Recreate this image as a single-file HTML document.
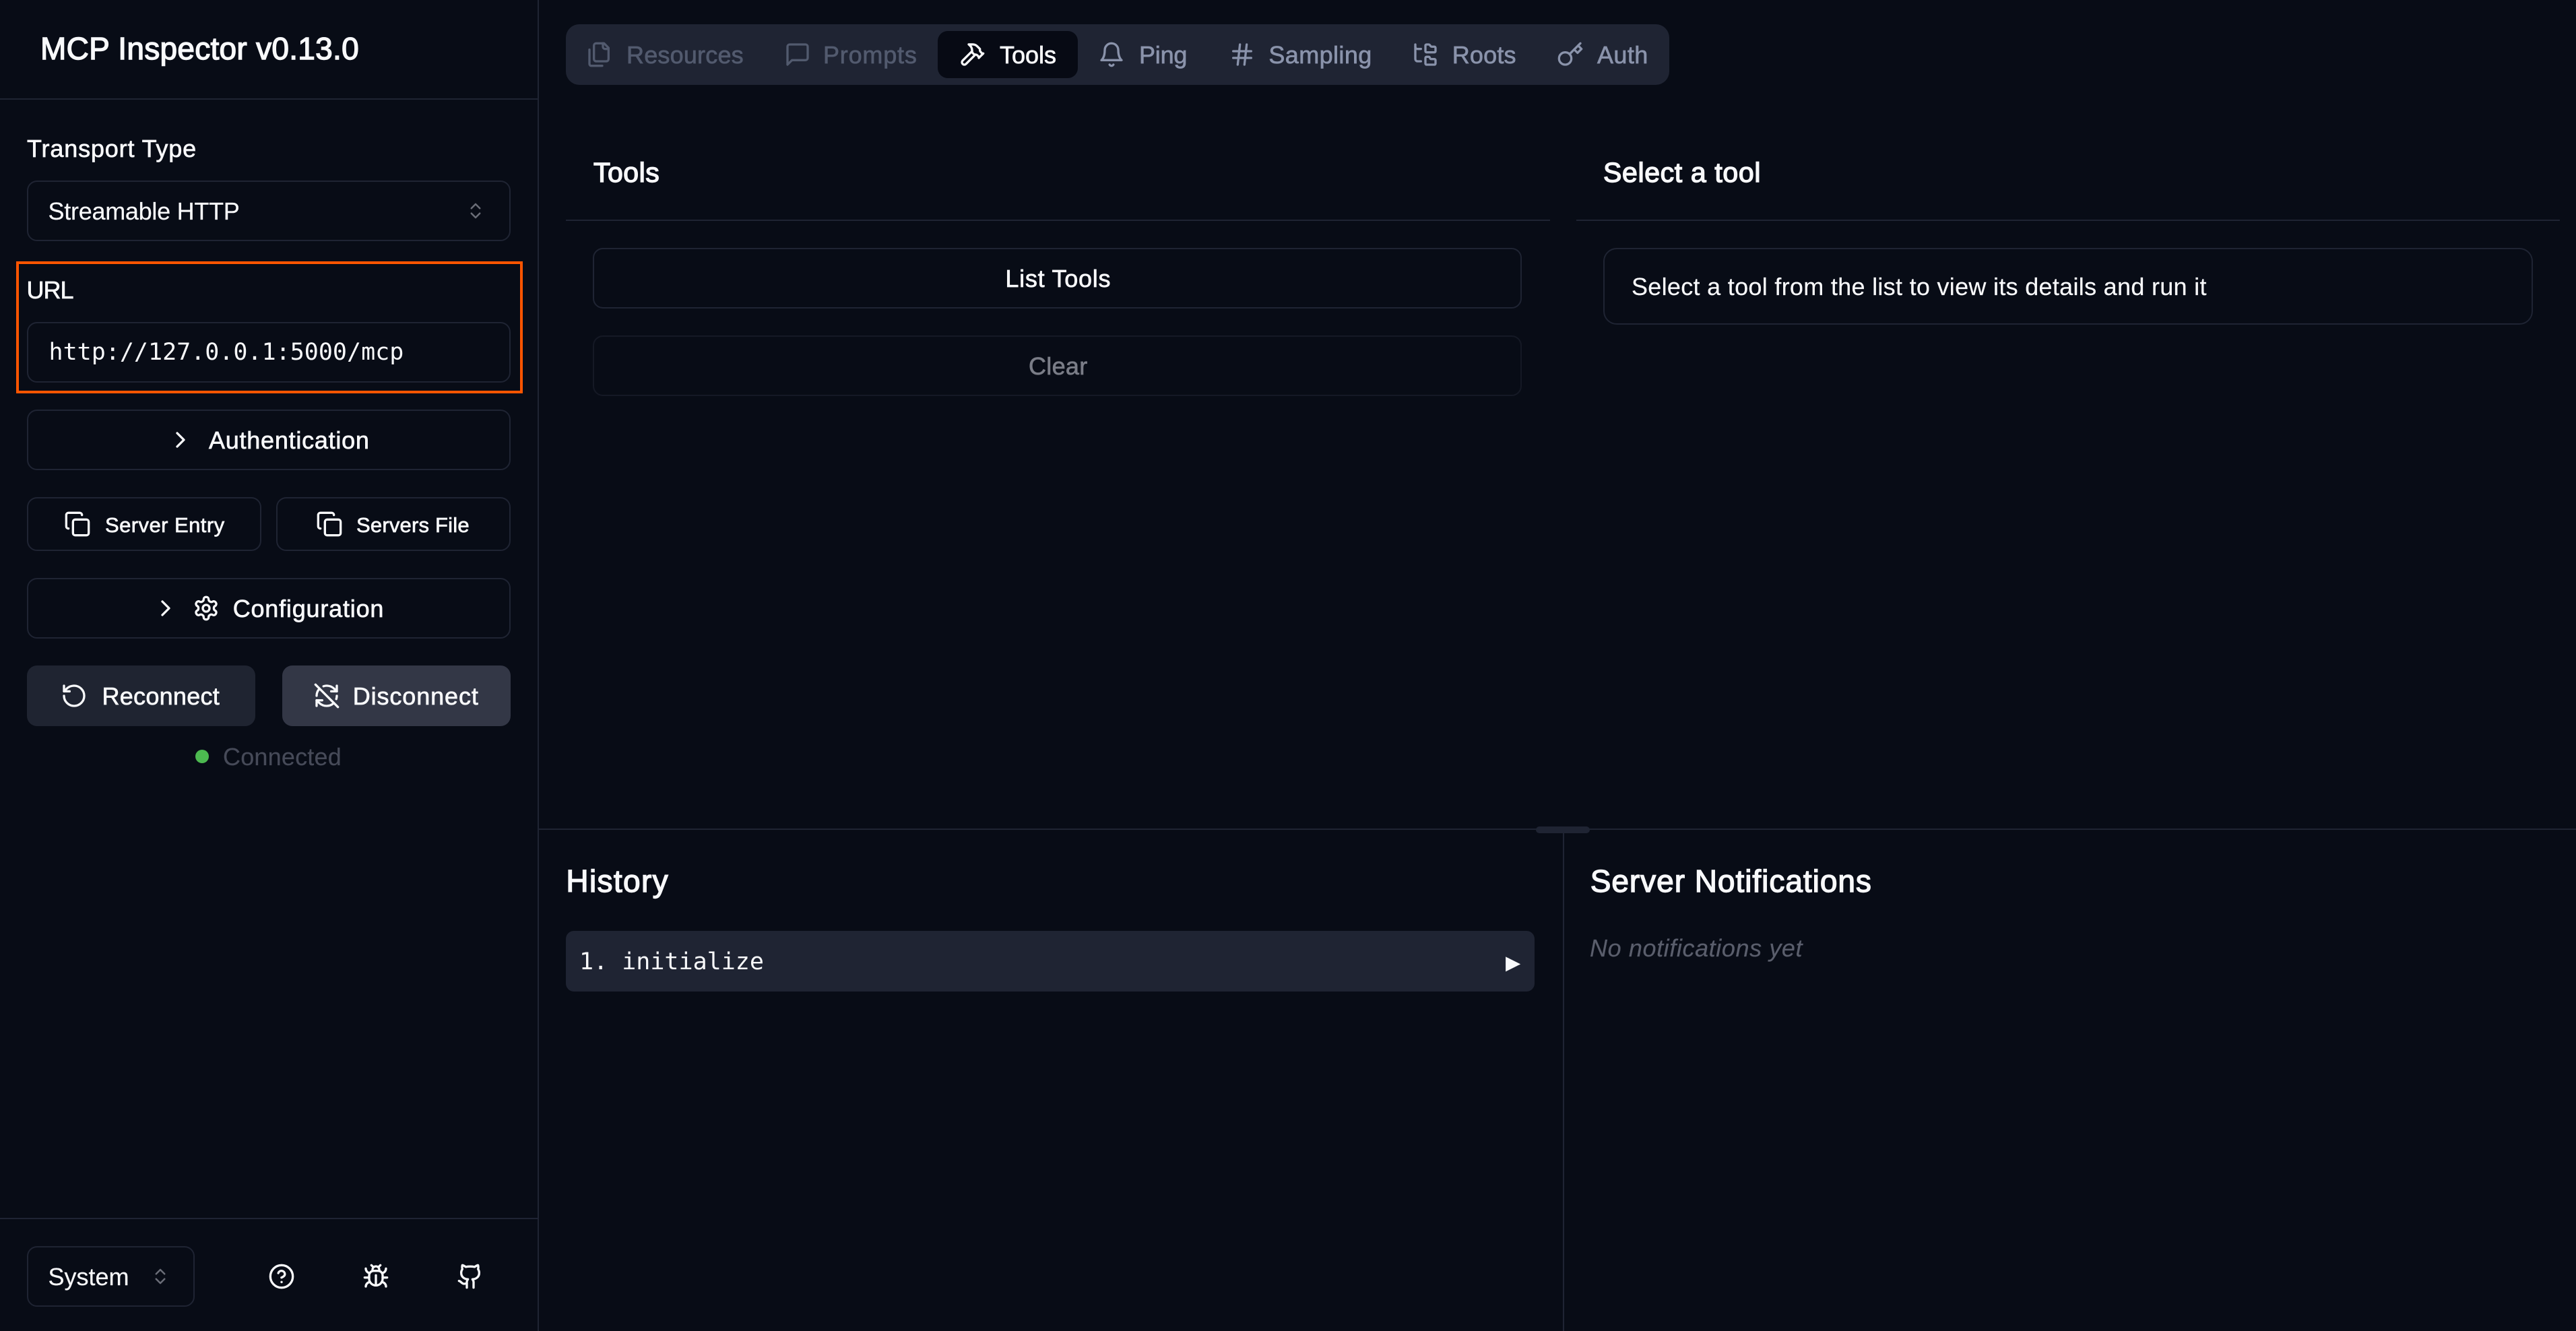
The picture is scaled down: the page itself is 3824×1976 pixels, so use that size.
<!DOCTYPE html>
<html lang="en">
<head>
<meta charset="utf-8">
<title>MCP Inspector</title>
<style>
html,body{margin:0;padding:0;width:3824px;height:1976px;overflow:hidden;background:#080c16}
*{box-sizing:border-box}
#app{position:relative;width:3824px;height:1976px;background:#080c16;color:#f8f9fb;font-family:"Liberation Sans",sans-serif;overflow:hidden}
.b{position:absolute;border:2px solid #1f2433;border-radius:15px}
.f{position:absolute;background:#1f2433}
.t{position:absolute;white-space:nowrap;line-height:1;font-size:36px;margin:0;font-weight:400;-webkit-text-stroke:.2px currentColor}
.m{-webkit-text-stroke:.7px currentColor}
.s{-webkit-text-stroke:1.4px currentColor}
.h41{font-size:41px}
.h46{font-size:46px}
.x31{font-size:31px}
.mono{font-family:"DejaVu Sans Mono","Liberation Mono",monospace;font-size:35px;-webkit-text-stroke:0}
.i{position:absolute;width:40px;height:40px;fill:none;stroke:currentColor;stroke-width:2;stroke-linecap:round;stroke-linejoin:round}
.c30{width:30px;height:30px;color:#6a6d77}
.dim{color:#525a6e}
.mut{color:#8a93ab}
</style>
</head>
<body>
<div id="app">

<!-- Sidebar -->
<div class="f" style="left:798px;top:0;width:2px;height:1976px"></div>
<h1 class="t h46 s" style="left:60px;top:49.2px;letter-spacing:.28px">MCP Inspector v0.13.0</h1>
<div class="f" style="left:0;top:146px;width:798px;height:2px"></div>

<label class="t m" style="left:40px;top:203.4px;letter-spacing:.85px">Transport Type</label>
<div class="b" style="left:40px;top:268px;width:718px;height:90px"></div>
<span class="t" style="left:71.5px;top:296.4px;letter-spacing:-.27px">Streamable HTTP</span>
<svg class="i c30" viewBox="0 0 24 24" style="left:690.5px;top:298px"><path d="m7 15 5 5 5-5"/><path d="m7 9 5-5 5 5"/></svg>

<div style="position:absolute;left:24px;top:388px;width:752px;height:196px;border:4px solid #ff5500"></div>
<label class="t m" style="left:39.5px;top:413.4px;letter-spacing:-1px">URL</label>
<div class="b" style="left:40px;top:478px;width:718px;height:90px"></div>
<span class="t mono" style="left:72.5px;top:506.4px">http://127.0.0.1:5000/mcp</span>

<div class="b" style="left:40px;top:608px;width:718px;height:90px"></div>
<svg class="i" viewBox="0 0 24 24" style="left:248px;top:633px"><path d="m9 18 6-6-6-6"/></svg>
<span class="t m" style="left:310px;top:636.4px;letter-spacing:.75px">Authentication</span>

<div class="b" style="left:40px;top:738px;width:348px;height:80px"></div>
<svg class="i" viewBox="0 0 24 24" style="left:95px;top:758px"><rect x="8" y="8" width="14" height="14" rx="2" ry="2"/><path d="M4 16c-1.1 0-2-.9-2-2V4c0-1.1.9-2 2-2h10c1.1 0 2 .9 2 2"/></svg>
<span class="t x31 m" style="left:156px;top:764.4px;letter-spacing:.44px">Server Entry</span>

<div class="b" style="left:410px;top:738px;width:348px;height:80px"></div>
<svg class="i" viewBox="0 0 24 24" style="left:469px;top:758px"><rect x="8" y="8" width="14" height="14" rx="2" ry="2"/><path d="M4 16c-1.1 0-2-.9-2-2V4c0-1.1.9-2 2-2h10c1.1 0 2 .9 2 2"/></svg>
<span class="t x31 m" style="left:529px;top:764.4px;letter-spacing:.2px">Servers File</span>

<div class="b" style="left:40px;top:858px;width:718px;height:90px"></div>
<svg class="i" viewBox="0 0 24 24" style="left:226px;top:883px"><path d="m9 18 6-6-6-6"/></svg>
<svg class="i" viewBox="0 0 24 24" style="left:286px;top:883px"><path d="M12.22 2h-.44a2 2 0 0 0-2 2v.18a2 2 0 0 1-1 1.73l-.43.25a2 2 0 0 1-2 0l-.15-.08a2 2 0 0 0-2.73.73l-.22.38a2 2 0 0 0 .73 2.73l.15.1a2 2 0 0 1 1 1.72v.51a2 2 0 0 1-1 1.74l-.15.09a2 2 0 0 0-.73 2.73l.22.38a2 2 0 0 0 2.73.73l.15-.08a2 2 0 0 1 2 0l.43.25a2 2 0 0 1 1 1.73V20a2 2 0 0 0 2 2h.44a2 2 0 0 0 2-2v-.18a2 2 0 0 1 1-1.73l.43-.25a2 2 0 0 1 2 0l.15.08a2 2 0 0 0 2.73-.73l.22-.39a2 2 0 0 0-.73-2.73l-.15-.08a2 2 0 0 1-1-1.74v-.5a2 2 0 0 1 1-1.74l.15-.09a2 2 0 0 0 .73-2.73l-.22-.38a2 2 0 0 0-2.73-.73l-.15.08a2 2 0 0 1-2 0l-.43-.25a2 2 0 0 1-1-1.73V4a2 2 0 0 0-2-2z"/><circle cx="12" cy="12" r="3"/></svg>
<span class="t m" style="left:345.7px;top:886.4px;letter-spacing:.8px">Configuration</span>

<div class="f" style="left:40px;top:988px;width:339px;height:90px;border-radius:15px;background:#1f2431"></div>
<svg class="i" viewBox="0 0 24 24" style="left:90px;top:1013px"><path d="M3 12a9 9 0 1 0 9-9 9.75 9.75 0 0 0-6.74 2.74L3 8"/><path d="M3 3v5h5"/></svg>
<span class="t m" style="left:151.5px;top:1015.9px;letter-spacing:.27px">Reconnect</span>

<div class="f" style="left:419px;top:988px;width:339px;height:90px;border-radius:15px;background:#333746"></div>
<svg class="i" viewBox="0 0 24 24" style="left:465px;top:1013px"><path d="M21 8L18.74 5.74A9.75 9.75 0 0 0 12 3C11 3 10.03 3.16 9.13 3.47"/><path d="M8 16H3v5"/><path d="M3 12C3 9.51 4 7.26 5.64 5.64"/><path d="m3 16 2.26 2.26A9.75 9.75 0 0 0 12 21c2.49 0 4.74-1 6.36-2.64"/><path d="M21 12c0 1-.16 1.97-.47 2.87"/><path d="M21 3v5h-5"/><path d="M22 22 2 2"/></svg>
<span class="t m" style="left:523.7px;top:1015.9px;letter-spacing:.9px">Disconnect</span>

<div style="position:absolute;left:290px;top:1113px;width:20px;height:20px;border-radius:50%;background:#4cb950"></div>
<span class="t" style="left:331px;top:1106.4px;letter-spacing:.2px;color:#464a58">Connected</span>

<div class="f" style="left:0;top:1808px;width:798px;height:2px"></div>
<div class="b" style="left:40px;top:1850px;width:249px;height:90px"></div>
<span class="t" style="left:71.5px;top:1878.4px">System</span>
<svg class="i c30" viewBox="0 0 24 24" style="left:223px;top:1880px"><path d="m7 15 5 5 5-5"/><path d="m7 9 5-5 5 5"/></svg>
<svg class="i" viewBox="0 0 24 24" style="left:398px;top:1875px"><circle cx="12" cy="12" r="10"/><path d="M9.09 9a3 3 0 0 1 5.83 1c0 2-3 3-3 3"/><path d="M12 17h.01"/></svg>
<svg class="i" viewBox="0 0 24 24" style="left:538px;top:1875px"><path d="m8 2 1.88 1.88"/><path d="M14.12 3.88 16 2"/><path d="M9 7.13v-1a3.003 3.003 0 1 1 6 0v1"/><path d="M12 20c-3.3 0-6-2.7-6-6v-3a4 4 0 0 1 4-4h4a4 4 0 0 1 4 4v3c0 3.3-2.7 6-6 6"/><path d="M12 20v-9"/><path d="M6.53 9C4.6 8.8 3 7.1 3 5"/><path d="M6 13H2"/><path d="M3 21c0-2.1 1.7-3.9 3.8-4"/><path d="M20.97 5c0 2.1-1.6 3.8-3.5 4"/><path d="M22 13h-4"/><path d="M17.2 17c2.1.1 3.8 1.9 3.8 4"/></svg>
<svg class="i" viewBox="0 0 24 24" style="left:678px;top:1875px"><path d="M15 22v-4a4.8 4.8 0 0 0-1-3.5c3 0 6-2 6-5.5.08-1.25-.27-2.48-1-3.5.28-1.15.28-2.35 0-3.5 0 0-1 0-3 1.5-2.64-.5-5.36-.5-8 0C6 2 5 2 5 2c-.3 1.15-.3 2.35 0 3.5A5.403 5.403 0 0 0 4 9c0 3.5 3 5.5 6 5.5-.39.49-.68 1.05-.85 1.65-.17.6-.22 1.23-.15 1.85v4"/><path d="M9 18c-4.51 2-5-2-7-2"/></svg>

<!-- Tabs -->
<div class="f" style="left:840px;top:36px;width:1638px;height:90px;border-radius:20px"></div>
<div class="f" style="left:1392px;top:46px;width:208px;height:70px;border-radius:15px;background:#070a14"></div>

<svg class="i dim" viewBox="0 0 24 24" style="left:870px;top:61px"><path d="M20 7h-3a2 2 0 0 1-2-2V2"/><path d="M9 18a2 2 0 0 1-2-2V4a2 2 0 0 1 2-2h7l4 4v10a2 2 0 0 1-2 2Z"/><path d="M3 7.6v12.8A1.6 1.6 0 0 0 4.6 22h9.8"/></svg>
<span class="t m dim" style="left:930px;top:63.6px;letter-spacing:.2px">Resources</span>
<svg class="i dim" viewBox="0 0 24 24" style="left:1163.5px;top:61px"><path d="M21 15a2 2 0 0 1-2 2H7l-4 4V5a2 2 0 0 1 2-2h14a2 2 0 0 1 2 2z"/></svg>
<span class="t m dim" style="left:1222px;top:63.6px;letter-spacing:.8px">Prompts</span>
<svg class="i" viewBox="0 0 24 24" style="left:1423px;top:61px"><path d="m15 12-8.373 8.373a1 1 0 1 1-3-3L12 9"/><path d="m18 15 4-4"/><path d="m21.5 11.5-1.914-1.914A2 2 0 0 1 19 8.172V7l-2.26-2.26a6 6 0 0 0-4.202-1.756L9 2.96l.92.82A6.18 6.18 0 0 1 12 8.4V10l2 2h1.172a2 2 0 0 1 1.414.586L18.5 14.5"/></svg>
<span class="t m" style="left:1484px;top:63.6px">Tools</span>
<svg class="i mut" viewBox="0 0 24 24" style="left:1630px;top:61px"><path d="M6 8a6 6 0 0 1 12 0c0 7 3 9 3 9H3s3-2 3-9"/><path d="M10.3 21a1.94 1.94 0 0 0 3.4 0"/></svg>
<span class="t m mut" style="left:1691px;top:63.6px;letter-spacing:-.2px">Ping</span>
<svg class="i mut" viewBox="0 0 24 24" style="left:1823.5px;top:61px"><line x1="4" x2="20" y1="9" y2="9"/><line x1="4" x2="20" y1="15" y2="15"/><line x1="10" x2="8" y1="3" y2="21"/><line x1="16" x2="14" y1="3" y2="21"/></svg>
<span class="t m mut" style="left:1883.4px;top:63.6px;letter-spacing:.4px">Sampling</span>
<svg class="i mut" viewBox="0 0 24 24" style="left:2096px;top:61px"><path d="M20 10a1 1 0 0 0 1-1V6a1 1 0 0 0-1-1h-2.5a1 1 0 0 1-.8-.4l-.9-1.2A1 1 0 0 0 15 3h-2a1 1 0 0 0-1 1v5a1 1 0 0 0 1 1Z"/><path d="M20 21a1 1 0 0 0 1-1v-3a1 1 0 0 0-1-1h-2.9a1 1 0 0 1-.88-.55l-.42-.85a1 1 0 0 0-.92-.6H13a1 1 0 0 0-1 1v5a1 1 0 0 0 1 1Z"/><path d="M3 5a2 2 0 0 0 2 2h3"/><path d="M3 3v13a2 2 0 0 0 2 2h3"/></svg>
<span class="t m mut" style="left:2155.7px;top:63.6px;letter-spacing:.2px">Roots</span>
<svg class="i mut" viewBox="0 0 24 24" style="left:2311px;top:61px"><circle cx="7.5" cy="15.5" r="5.5"/><path d="m21 2-9.6 9.6"/><path d="m15.5 7.5 3 3L22 7l-3-3"/></svg>
<span class="t m mut" style="left:2371px;top:63.6px;letter-spacing:.4px">Auth</span>

<!-- Tools panel -->
<h2 class="t h41 s" style="left:881px;top:236px;letter-spacing:.5px">Tools</h2>
<div class="f" style="left:840px;top:326px;width:1461px;height:2px"></div>
<div class="b" style="left:880px;top:368px;width:1379px;height:90px"></div>
<span class="t m" style="left:1492.4px;top:396.4px;letter-spacing:.75px">List Tools</span>
<div class="b" style="left:880px;top:498px;width:1379px;height:90px;border-color:#151925"></div>
<span class="t m" style="left:1527px;top:526.4px;letter-spacing:.3px;color:#7a7d87">Clear</span>

<h2 class="t h41 s" style="left:2380px;top:236px;letter-spacing:.65px">Select a tool</h2>
<div class="f" style="left:2340px;top:326px;width:1460px;height:2px"></div>
<div class="b" style="left:2380px;top:368px;width:1380px;height:114px;border-radius:20px"></div>
<span class="t" style="left:2422px;top:408.4px;letter-spacing:.3px">Select a tool from the list to view its details and run it</span>

<!-- Bottom panel -->
<div class="f" style="left:800px;top:1230px;width:3024px;height:2px"></div>
<div class="f" style="left:2320px;top:1232px;width:2px;height:744px"></div>
<div class="f" style="left:2280px;top:1227px;width:80px;height:10px;border-radius:5px"></div>

<h2 class="t h46 s" style="left:840.4px;top:1285px;letter-spacing:1.35px">History</h2>
<div class="f" style="left:840px;top:1382px;width:1438px;height:90px;border-radius:12px"></div>
<span class="t mono" style="left:860px;top:1411.1px">1. initialize</span>
<span class="t mono" style="left:2235px;top:1409.5px;font-size:37px">▶</span>

<h2 class="t h46 s" style="left:2360.7px;top:1285px;letter-spacing:.97px">Server Notifications</h2>
<p class="t" style="left:2360px;top:1390.4px;letter-spacing:.6px;font-style:italic;color:#5a5e6c">No notifications yet</p>

</div>
</body>
</html>
